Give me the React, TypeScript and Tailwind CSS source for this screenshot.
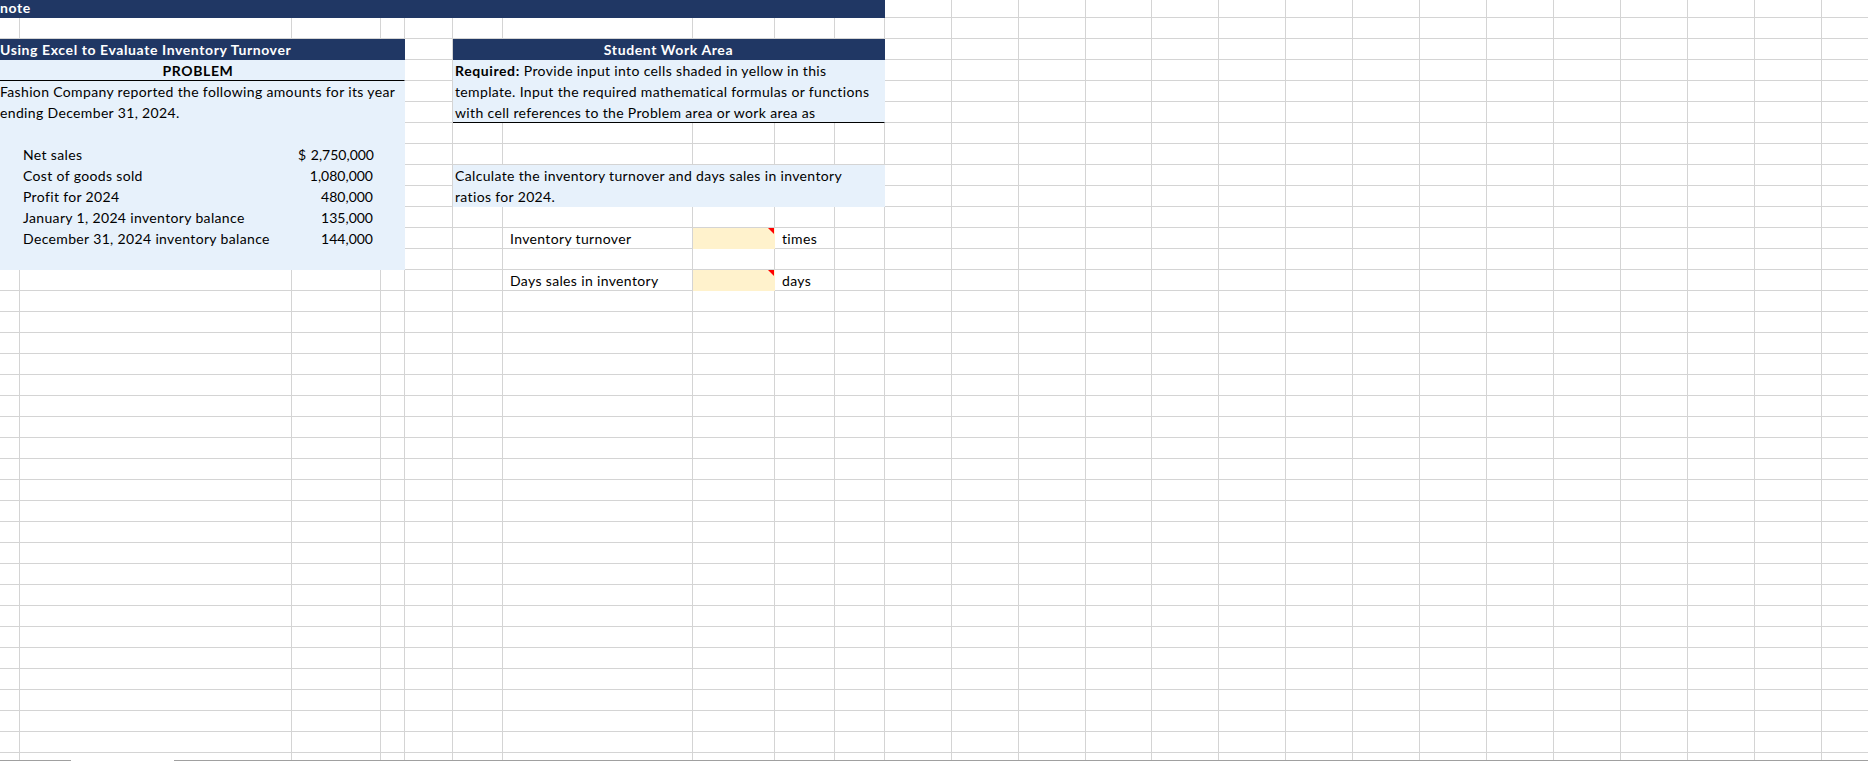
import React from "react";

type Kind = "plain" | "last" | "navy" | "blue" | "blueLine" | "yellow";
type C = { span?: number; kind?: Kind; content?: React.ReactNode; cls?: string };

const KIND: Record<Kind, string> = {
  plain: "border-r border-b border-[#d4d4d4] bg-white",
  last: "border-r border-[#d4d4d4] bg-white",
  navy: "border-r border-b border-[#203764] bg-[#203764] text-white font-bold tracking-[0.6px]",
  blue: "border-r border-b border-[#e7f1fb] bg-[#e7f1fb]",
  blueLine: "border-r border-b border-r-[#e7f1fb] border-b-black bg-[#e7f1fb]",
  yellow: "border-r border-b border-[#fff2cc] bg-[#fff2cc] relative",
};

const SPAN: Record<number, string> = {
  1: "col-span-1",
  4: "col-span-4",
  5: "col-span-5",
  10: "col-span-10",
};

const fillRow = (cells: C[], kind: Kind = "plain"): C[] => {
  const used = cells.reduce((s, c) => s + (c.span ?? 1), 0);
  return [...cells, ...Array.from({ length: 25 - used }, () => ({ kind }))];
};

const Flag = () => (
  <svg className="absolute top-0 right-0" width="6" height="6" viewBox="0 0 6 6">
    <polygon points="0,0 6,0 6,6" fill="#ff0000" />
  </svg>
);

const item = (label: string, value: string, dollar = false): C[] => [
  { kind: "blue" },
  { kind: "blue", content: <span>{label}</span>, cls: "pl-[3px]" },
  dollar
    ? {
        kind: "blue",
        content: (
          <>
            <span>$</span>
            <span className="tracking-normal">{value}</span>
          </>
        ),
        cls: "justify-between pl-[6px] pr-[6px]",
      }
    : { kind: "blue", content: <span className="tracking-normal">{value}</span>, cls: "justify-end pr-[7px]" },
  { kind: "blue" },
];

const rows: C[][] = [];
// row 0
rows.push(fillRow([{ span: 10, kind: "navy", content: <span>note</span> }]));
// row 1
rows.push(fillRow([]));
// row 2
rows.push(
  fillRow([
    { span: 4, kind: "navy", content: <span>Using Excel to Evaluate Inventory Turnover</span> },
    {},
    { span: 5, kind: "navy", content: <span>Student Work Area</span>, cls: "justify-center" },
  ])
);
// row 3
rows.push(
  fillRow([
    {
      span: 4,
      kind: "blueLine",
      content: <span>PROBLEM</span>,
      cls: "justify-center font-bold tracking-[0.6px] pr-[8px]",
    },
    {},
    {
      span: 5,
      kind: "blue",
      content: (
        <span>
          <span className="font-bold tracking-[0.6px]">Required:</span>
          {" Provide input into cells shaded in yellow in this"}
        </span>
      ),
      cls: "pl-[2px]",
    },
  ])
);
// row 4
rows.push(
  fillRow([
    { span: 4, kind: "blue", content: <span>Fashion Company reported the following amounts for its year</span> },
    {},
    {
      span: 5,
      kind: "blue",
      content: <span>template. Input the required mathematical formulas or functions</span>,
      cls: "pl-[2px]",
    },
  ])
);
// row 5
rows.push(
  fillRow([
    { span: 4, kind: "blue", content: <span>ending December 31, 2024.</span> },
    {},
    {
      span: 5,
      kind: "blueLine",
      content: <span>with cell references to the Problem area or work area as</span>,
      cls: "pl-[2px]",
    },
  ])
);
// row 6
rows.push(fillRow([{ span: 4, kind: "blue" }]));
// row 7
rows.push(fillRow(item("Net sales", "2,750,000", true)));
// row 8
rows.push(
  fillRow([
    ...item("Cost of goods sold", "1,080,000"),
    {},
    {
      span: 5,
      kind: "blue",
      content: <span>Calculate the inventory turnover and days sales in inventory</span>,
      cls: "pl-[2px]",
    },
  ])
);
// row 9
rows.push(
  fillRow([
    ...item("Profit for 2024", "480,000"),
    {},
    { span: 5, kind: "blue", content: <span>ratios for 2024.</span>, cls: "pl-[2px]" },
  ])
);
// row 10
rows.push(fillRow(item("January 1, 2024 inventory balance", "135,000")));
// row 11
rows.push(
  fillRow([
    ...item("December 31, 2024 inventory balance", "144,000"),
    {},
    {},
    { content: <span>Inventory turnover</span>, cls: "pl-[7px]" },
    { kind: "yellow", content: <Flag /> },
    { content: <span>times</span>, cls: "pl-[7px]" },
  ])
);
// row 12
rows.push(fillRow([{ span: 4, kind: "blue" }]));
// row 13
rows.push(
  fillRow([
    {}, {}, {}, {}, {}, {},
    { content: <span>Days sales in inventory</span>, cls: "pl-[7px]" },
    { kind: "yellow", content: <Flag /> },
    { content: <span>days</span>, cls: "pl-[7px]" },
  ])
);
// rows 14-35
for (let i = 14; i <= 35; i++) rows.push(fillRow([]));
// row 36 (partial)
rows.push(fillRow([], "last"));

export default function App() {
  return (
    <div className="w-[1868px] h-[761px] overflow-hidden bg-white font-[family-name:Lato,Liberation_Sans,sans-serif] text-[14px] leading-[17px] tracking-[0.35px] text-black">
      <div className="grid grid-cols-[20px_272px_89px_24px_48px_50px_190px_82px_60px_50px_67px_67px_67px_66px_67px_67px_67px_67px_67px_67px_67px_67px_67px_67px_47px] grid-rows-[18px_repeat(35,21px)_7px] w-[1869px]">
        {rows.map((row, r) =>
          row.map((c, i) => (
            <div
              key={`${r}-${i}`}
              className={`flex items-end overflow-hidden whitespace-nowrap pb-[1px] ${SPAN[c.span ?? 1]} ${KIND[c.kind ?? "plain"]} ${c.cls ?? ""}`}
            >
              {c.content}
            </div>
          ))
        )}
      </div>
      <div className="flex h-px">
        <div className="w-[71px] bg-[#a0a0a0]" />
        <div className="w-[103px]" />
        <div className="flex-1 bg-[#a0a0a0]" />
      </div>
    </div>
  );
}
